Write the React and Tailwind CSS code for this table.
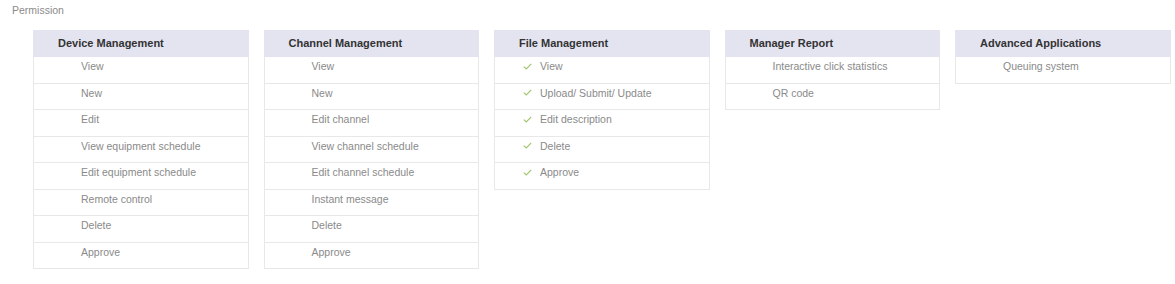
import React from "react";

const groups = [
  {
    title: "Device Management",
    items: [
      "View",
      "New",
      "Edit",
      "View equipment schedule",
      "Edit equipment schedule",
      "Remote control",
      "Delete",
      "Approve",
    ],
  },
  {
    title: "Channel Management",
    items: [
      "View",
      "New",
      "Edit channel",
      "View channel schedule",
      "Edit channel schedule",
      "Instant message",
      "Delete",
      "Approve",
    ],
  },
  {
    title: "File Management",
    checked: true,
    items: ["View", "Upload/ Submit/ Update", "Edit description", "Delete", "Approve"],
  },
  {
    title: "Manager Report",
    items: ["Interactive click statistics", "QR code"],
  },
  {
    title: "Advanced Applications",
    items: ["Queuing system"],
  },
];

const Check = () => (
  <svg width="9" height="7" viewBox="0 0 9 7" className="mr-[8px] shrink-0">
    <polyline
      points="0.8,3.6 3.3,6 8.2,0.8"
      fill="none"
      stroke="#a4c46f"
      strokeWidth="1.2"
    />
  </svg>
);

const App = () => {
  return (
    <div
      className="w-[1175px] h-[284px] bg-white text-[11px]"
      style={{ fontFamily: '"Liberation Sans", Arial, sans-serif' }}
    >
      <div className="pl-[12px] pt-[3px] h-[30px] text-[10.5px] text-[#8a8a8a]">Permission</div>

      <div className="flex items-start gap-[15px] pl-[33px]">
        {groups.map((g) => (
          <div key={g.title} className="w-[215.5px] shrink-0">
            <div className="h-[27px] bg-[#e4e4f1] flex items-center pl-[25px] font-bold text-[#333]">
              {g.title}
            </div>
            <div className="border-x border-[#e8e8e8]">
              {g.items.map((item) => (
                <div
                  key={item}
                  className={`h-[26.5px] border-b border-[#e8e8e8] flex items-start pt-[2px] text-[10.5px] text-[#8a8a8a] ${
                    g.checked ? "pl-[28px]" : "pl-[47px]"
                  }`}
                >
                  {g.checked && (
                    <span className="h-[14px] flex items-center">
                      <Check />
                    </span>
                  )}
                  <span className="leading-[14px]">{item}</span>
                </div>
              ))}
            </div>
          </div>
        ))}
      </div>
    </div>
  );
};

export default App;
